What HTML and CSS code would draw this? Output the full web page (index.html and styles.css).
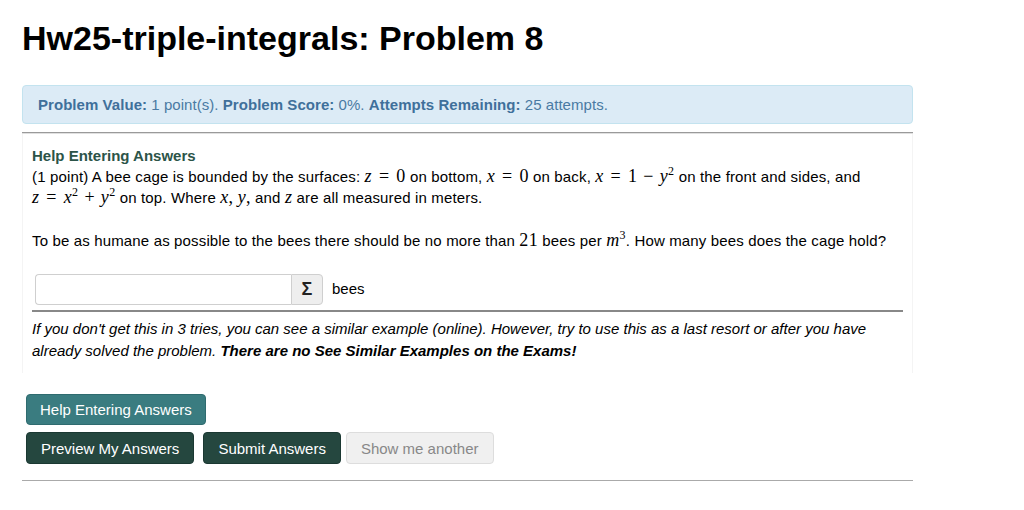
FILE: index.html
```html
<html>
<head>
  <meta charset="utf-8">
  <link rel="stylesheet" href="styles.css">
</head>
<body>
  <div class="page">
    <h1 class="title">Hw25-triple-integrals: Problem 8</h1>

    <div class="info">
      <b>Problem Value:</b> 1 point(s). <b>Problem Score:</b> 0%. <b>Attempts Remaining:</b> 25 attempts.
    </div>
    <hr class="rule">

    <div class="problem">
      <div class="help-head">Help Entering Answers</div>
      <div class="line">(1 point) A bee cage is bounded by the surfaces: <span class="m"><i>z</i><span class="rel">=</span>0</span> on bottom, <span class="m"><i>x</i><span class="rel">=</span>0</span> on back, <span class="m"><i>x</i><span class="rel">=</span>1<span class="bin">&minus;</span><i>y</i><sup>2</sup></span> on the front and sides, and</div>
      <div class="line"><span class="m"><i>z</i><span class="rel">=</span><i>x</i><sup>2</sup><span class="bin">+</span><i>y</i><sup>2</sup></span> on top. Where <span class="m"><i>x</i>,</span> <span class="m"><i>y</i>,</span> and <span class="m"><i>z</i></span> are all measured in meters.</div>
      <div class="line gap">To be as humane as possible to the bees there should be no more than <span class="m">21</span> bees per <span class="m"><i>m</i><sup>3</sup></span>. How many bees does the cage hold?</div>

      <div class="answer-row">
        <div class="input-group">
          <input class="answer" type="text">
          <span class="addon">&Sigma;</span>
        </div>
        <span class="unit">bees</span>
      </div>
      <div class="thick-rule"></div>

      <div class="note">If you don't get this in 3 tries, you can see a similar example (online). However, try to use this as a last resort or after you have already solved the problem. <b>There are no See Similar Examples on the Exams!</b></div>
    </div>

    <div class="buttons">
      <div class="btn-row">
        <button class="btn btn-help">Help Entering Answers</button>
      </div>
      <div class="btn-row">
        <button class="btn btn-dark">Preview My Answers</button>
        <button class="btn btn-dark">Submit Answers</button>
        <button class="btn btn-off">Show me another</button>
      </div>
    </div>
    <hr class="rule bottom">
  </div>
</body>
</html>
```

FILE: styles.css
```css
html, body {
  margin: 0;
  padding: 0;
  font-family: 'Liberation Sans', Helvetica, Arial, sans-serif;
  font-size: 15px;
  color: #000;
  background: #fff;
}
.page {
  width: 891px;
  padding: 0 22px;
}
.title {
  font-size: 34px;
  font-weight: bold;
  margin: 0;
  padding-top: 19px;
  line-height: 38px;
}
.info {
  margin-top: 28px;
  height: 37px;
  line-height: 38px;
  padding: 0 15px;
  background: #dcebf6;
  border: 1px solid #c3e3ef;
  border-radius: 4px;
  color: #4a7aa3;
  letter-spacing: 0.05px;
}
.info b {
  color: #3f709b;
}
.rule {
  margin: 8px 0 0 0;
  border: 0;
  border-top: 1px solid #9a9a9a;
  border-bottom: 1px solid #e0e0e0;
  height: 0;
}
.problem {
  border-left: 1px solid #f4f4f4;
  border-right: 1px solid #f4f4f4;
  padding: 11px 9px 11px 9px;
}
.help-head {
  font-weight: bold;
  color: #2c5448;
  line-height: 21px;
}
.line {
  line-height: 21px;
  letter-spacing: 0.15px;
}
.gap {
  margin-top: 22px;
}
.m {
  font-family: 'Liberation Serif', 'Times New Roman', serif;
  font-size: 18px;
  line-height: 0;
  letter-spacing: 0.3px;
}
.m i {
  font-style: italic;
}
.rel {
  padding: 0 7px;
}
.bin {
  padding: 0 6px;
}
.m sup {
  font-size: 12px;
  line-height: 0;
  vertical-align: 7px;
}
.answer-row {
  display: flex;
  align-items: center;
  margin-top: 23px;
  padding-left: 3px;
}
.input-group {
  display: flex;
}
.answer {
  width: 256px;
  height: 31px;
  box-sizing: border-box;
  border: 1px solid #cfcfcf;
  border-right: 0;
  border-radius: 4px 0 0 4px;
  margin: 0;
  padding: 4px 6px;
  font-size: 15px;
}
.addon {
  width: 32px;
  height: 31px;
  box-sizing: border-box;
  border: 1px solid #cfcfcf;
  border-radius: 0 4px 4px 0;
  background: #eeeeee;
  display: flex;
  align-items: center;
  justify-content: center;
  font-weight: bold;
  font-size: 18px;
  color: #222;
}
.unit {
  margin-left: 9px;
  margin-top: -3px;
}
.thick-rule {
  height: 2px;
  background: #888;
  margin-top: 5px;
}
.note {
  font-style: italic;
  line-height: 22px;
  margin-top: 6px;
}
.buttons {
  padding: 21px 0 0 4px;
}
.btn-row {
  display: flex;
  gap: 9px;
  margin-bottom: 7px;
}
.btn {
  font-family: 'Liberation Sans', Helvetica, Arial, sans-serif;
  font-size: 15px;
  height: 32px;
  padding: 0 13px;
  border-radius: 4px;
  border: 1px solid transparent;
  cursor: pointer;
}
.btn-help {
  height: 31px;
  background: #3a7c80;
  border-color: #2f6b6f;
  color: #fff;
}
.btn-dark {
  padding: 0 14px;
  background: #25473f;
  border-color: #1b3832;
  color: #fff;
}
.btn-off {
  padding: 0 14px;
  background: #f0f0f0;
  border-color: #dddddd;
  color: #888;
  margin-left: -4px;
}
.bottom {
  margin-top: 16px;
  border-bottom: 0;
  border-top-color: #aaa;
}
```
